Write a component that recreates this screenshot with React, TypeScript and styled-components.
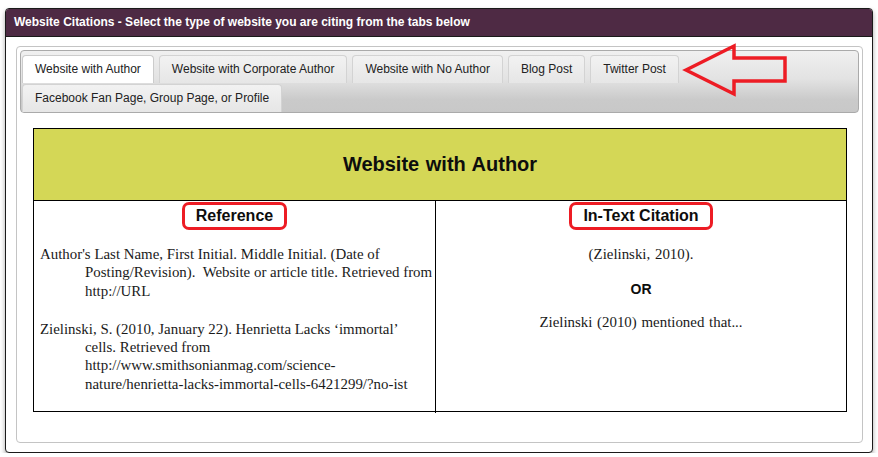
import styled, { createGlobalStyle } from "styled-components";

const GlobalStyle = createGlobalStyle`
  html, body {
    margin: 0;
    padding: 0;
    background: #ffffff;
  }
  body {
    font-family: "Liberation Sans", Arial, sans-serif;
  }
`;

const Panel = styled.div`
  position: relative;
  margin: 8px 0 0 5px;
  width: 866px;
  border: 1px solid #1a1a1a;
  border-radius: 4px;
  background: #fff;
  box-shadow: 0 3px 5px rgba(0, 0, 0, 0.35);
`;

const Header = styled.div`
  height: 27px;
  line-height: 26px;
  padding-left: 8px;
  background: #4e2a44;
  color: #fff;
  font-weight: bold;
  font-size: 12px;
  border-radius: 3px 3px 0 0;
  border-bottom: 1px solid #1a1a1a;
`;

const Body = styled.div`
  padding: 9px 9px 9px 10px;
`;

const TabsBox = styled.div`
  border: 1px solid #c4c4c4;
  border-radius: 4px;
  padding: 3px;
`;

const TabBar = styled.ul`
  display: flex;
  flex-wrap: wrap;
  row-gap: 1px;
  margin: 0;
  padding: 4px 1px 0 1px;
  list-style: none;
  border: 1px solid #aaaaaa;
  border-radius: 4px;
  background: linear-gradient(to bottom, #f0f0f0 0%, #e3e3e3 45%, #cacaca 80%, #c8c8c8 100%);
`;

const Tab = styled.li<{ $active?: boolean }>`
  height: 28px;
  line-height: 27px;
  padding: 0 12px;
  margin-right: 5px;
  box-sizing: border-box;
  border: 1px solid ${(p) => (p.$active ? "#cccccc" : "#d3d3d3")};
  border-bottom: none;
  border-radius: 4px 4px 0 0;
  font-size: 12px;
  color: #222;
  background: ${(p) =>
    p.$active ? "#ffffff" : "linear-gradient(to bottom, #f2f2f2 0%, #e6e6e6 100%)"};
  white-space: nowrap;
`;

const Content = styled.div`
  padding: 15px 12px 27px 13px;
`;

const Table = styled.div`
  border: 1px solid #000;
`;

const TitleRow = styled.div`
  height: 71px;
  display: flex;
  align-items: center;
  justify-content: center;
  background: #d4d756;
  border-bottom: 1px solid #000;
  font-size: 20px;
  font-weight: bold;
  color: #0d0d0d;
  word-spacing: 1px;
`;

const Columns = styled.div`
  display: grid;
  grid-template-columns: 401px 1fr;
  height: 210px;
`;

const Cell = styled.div<{ $center?: boolean }>`
  padding: ${(p) => (p.$center ? "0 6px" : "0 0 0 6px")};
  text-align: ${(p) => (p.$center ? "center" : "left")};
  & + & {
    border-left: 1px solid #000;
  }
`;

const HeadingWrap = styled.div<{ $shift?: number }>`
  text-align: center;
  padding-top: 1px;
  padding-right: ${(p) => p.$shift ?? 0}px;
`;

const Circled = styled.span`
  display: inline-block;
  padding: 0 11px;
  height: 22px;
  line-height: 22px;
  border: 3px solid #ed1c24;
  border-radius: 7px;
  font-size: 16px;
  font-weight: bold;
  color: #0d0d0d;
`;

const Cite = styled.p`
  margin: 15px 0 20px 0;
  padding-left: 45px;
  text-indent: -45px;
  font-family: "Liberation Serif", "Times New Roman", serif;
  font-size: 14.9px;
  line-height: 18.3px;
  color: #1a1a1a;
`;

const CenterLine = styled.p`
  margin: 15px 0 0 0;
  font-family: "Liberation Serif", "Times New Roman", serif;
  font-size: 14.9px;
  line-height: 18px;
  color: #1a1a1a;
  word-spacing: 1px;
`;

const Or = styled.p`
  margin: 17px 0 0 0;
  font-size: 14px;
  font-weight: bold;
  line-height: 18px;
  color: #0d0d0d;
`;

const Arrow = styled.svg`
  position: absolute;
  left: 676px;
  top: 33px;
  width: 110px;
  height: 56px;
  overflow: visible;
`;

const tabs = [
  "Website with Author",
  "Website with Corporate Author",
  "Website with No Author",
  "Blog Post",
  "Twitter Post",
  "Facebook Fan Page, Group Page, or Profile",
];

const App = () => {
  return (
    <>
      <GlobalStyle />
      <Panel>
        <Header>Website Citations - Select the type of website you are citing from the tabs below</Header>
        <Body>
          <TabsBox>
            <TabBar>
              {tabs.map((t, i) => (
                <Tab key={t} $active={i === 0}>
                  {t}
                </Tab>
              ))}
            </TabBar>
            <Content>
              <Table>
                <TitleRow>Website with Author</TitleRow>
                <Columns>
                  <Cell>
                    <HeadingWrap $shift={6}>
                      <Circled>Reference</Circled>
                    </HeadingWrap>
                    <Cite>
                      Author's Last Name, First Initial. Middle Initial. (Date of Posting/Revision).&nbsp; Website or
                      article title. Retrieved from http://URL
                    </Cite>
                    <Cite>
                      Zielinski, S. (2010, January 22). Henrietta Lacks ‘immortal’
                      <br />
                      cells. Retrieved from
                      <br />
                      http://www.smithsonianmag.com/science-
                      <br />
                      nature/henrietta-lacks-immortal-cells-6421299/?no-ist
                    </Cite>
                  </Cell>
                  <Cell $center>
                    <HeadingWrap>
                      <Circled>In-Text Citation</Circled>
                    </HeadingWrap>
                    <CenterLine>(Zielinski, 2010).</CenterLine>
                    <Or>OR</Or>
                    <CenterLine>Zielinski (2010) mentioned that...</CenterLine>
                  </Cell>
                </Columns>
              </Table>
            </Content>
          </TabsBox>
        </Body>
        <Arrow viewBox="676 33 110 56">
          <polygon
            points="680,61 728,37 728,49 779,49 779,72 728,72 728,85"
            fill="none"
            stroke="#ed1c24"
            strokeWidth="3.5"
            strokeLinejoin="miter"
          />
        </Arrow>
      </Panel>
    </>
  );
};

export default App;
